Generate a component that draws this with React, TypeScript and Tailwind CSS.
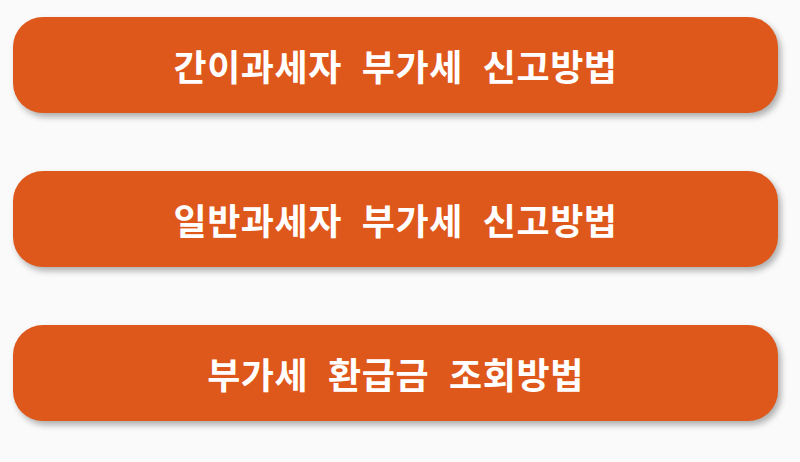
const items = ['간이과세자 부가세 신고방법', '일반과세자 부가세 신고방법', '부가세 환급금 조회방법'];

export default function App() {
  return (
    <div className="min-h-[462px] w-[800px] bg-[#fafafa] pt-[17px] pl-[13px] pr-[22px]">
      <div className="flex flex-col gap-[58px]">
        {items.map((label) => (
          <button
            key={label}
            className="flex h-[96px] w-full items-center justify-center rounded-[30px] bg-[#df581b] text-[36px] font-bold tracking-[0.6px] text-white shadow-[3px_4px_6px_rgba(0,0,0,0.3)] [word-spacing:11px]"
            style={{ fontFamily: '"Noto Sans CJK KR", "Noto Sans", sans-serif' }}
          >
            {label}
          </button>
        ))}
      </div>
    </div>
  );
}
